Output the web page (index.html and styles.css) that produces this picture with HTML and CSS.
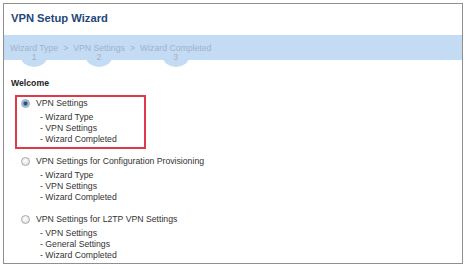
FILE: index.html
```html
<!DOCTYPE html>
<html>
<head>
<meta charset="utf-8">
<link rel="stylesheet" href="styles.css">
</head>
<body>
<div class="frame">
  <div class="header"><h1 class="title">VPN Setup Wizard</h1></div>
  <div class="steps">
    <div class="step"><span class="step-label">Wizard Type</span><span class="step-num">1</span></div>
    <span class="sep">&gt;</span>
    <div class="step"><span class="step-label">VPN Settings</span><span class="step-num">2</span></div>
    <span class="sep">&gt;</span>
    <div class="step"><span class="step-label">Wizard Completed</span><span class="step-num">3</span></div>
  </div>
  <div class="content">
    <div class="section-title">Welcome</div>
    <div class="option highlighted">
      <div class="option-head"><span class="radio checked"></span><span>VPN Settings</span></div>
      <ul class="sub">
        <li>- Wizard Type</li>
        <li>- VPN Settings</li>
        <li>- Wizard Completed</li>
      </ul>
    </div>
    <div class="option">
      <div class="option-head"><span class="radio"></span><span>VPN Settings for Configuration Provisioning</span></div>
      <ul class="sub">
        <li>- Wizard Type</li>
        <li>- VPN Settings</li>
        <li>- Wizard Completed</li>
      </ul>
    </div>
    <div class="option">
      <div class="option-head"><span class="radio"></span><span>VPN Settings for L2TP VPN Settings</span></div>
      <ul class="sub">
        <li>- VPN Settings</li>
        <li>- General Settings</li>
        <li>- Wizard Completed</li>
      </ul>
    </div>
  </div>
</div>
</body>
</html>
```

FILE: styles.css
```css
html, body {
  margin: 0;
  padding: 0;
  background: #ffffff;
}

body {
  font-family: "Liberation Sans", Arial, sans-serif;
  font-size: 8.7px;
  color: #333333;
}

.frame {
  margin: 3px;
  width: 458px;
  height: 259px;
  border: 1px solid #8f8f8f;
  box-sizing: content-box;
  overflow: hidden;
}

.header {
  height: 31px;
  padding: 7px 0 0 7px;
  box-sizing: border-box;
}

.title {
  margin: 0;
  font-size: 11.2px;
  line-height: 14px;
  font-weight: bold;
  color: #24477b;
}

.steps {
  display: flex;
  align-items: flex-start;
  height: 25px;
  padding-left: 6px;
  background: linear-gradient(#c4dbf4, #c4dbf4) top left / 100% 25px no-repeat;
  color: #9fb2c9;
}

.step {
  display: flex;
  flex-direction: column;
  align-items: center;
}

.step-label,
.sep {
  margin-top: 7px;
  line-height: 12px;
  white-space: nowrap;
}

.step-label {
  position: relative;
  z-index: 1;
}

.sep {
  margin-left: 5px;
  margin-right: 5px;
}

.step-num {
  display: flex;
  align-items: center;
  justify-content: center;
  width: 26px;
  height: 20px;
  margin-top: -7px;
  border-radius: 50%;
  background: #c4dbf4;
  line-height: 10px;
  box-sizing: border-box;
}

.content {
  padding: 18px 0 0 7px;
}

.section-title {
  line-height: 11px;
  font-weight: bold;
  color: #222222;
}

.option {
  margin-left: 4px;
  margin-top: 3.5px;
  width: 123px;
  padding: 1.5px 0 2.5px 3.5px;
  border: 2px solid transparent;
  box-sizing: content-box;
}

.option.highlighted {
  margin-top: 5.5px;
  border-color: #df3a4b;
}

.option-head {
  display: flex;
  align-items: center;
  gap: 6.5px;
  line-height: 11px;
  white-space: nowrap;
}

.radio {
  flex: none;
  width: 9px;
  height: 9px;
  border-radius: 50%;
  border: 1px solid #a9a9a9;
  box-sizing: border-box;
  background: radial-gradient(circle at 45% 40%, #ffffff 0, #f1f1f1 40%, #d6d6d6 100%);
}

.radio.checked {
  border-color: #8ea6bf;
  background: radial-gradient(circle, #2c4b6e 0, #34577d 1.6px, #9dbbd8 2.6px, #e6eef6 100%);
}

.sub {
  list-style: none;
  margin: 2.5px 0 0 19.5px;
  padding: 0;
  line-height: 11px;
  white-space: nowrap;
}
```
